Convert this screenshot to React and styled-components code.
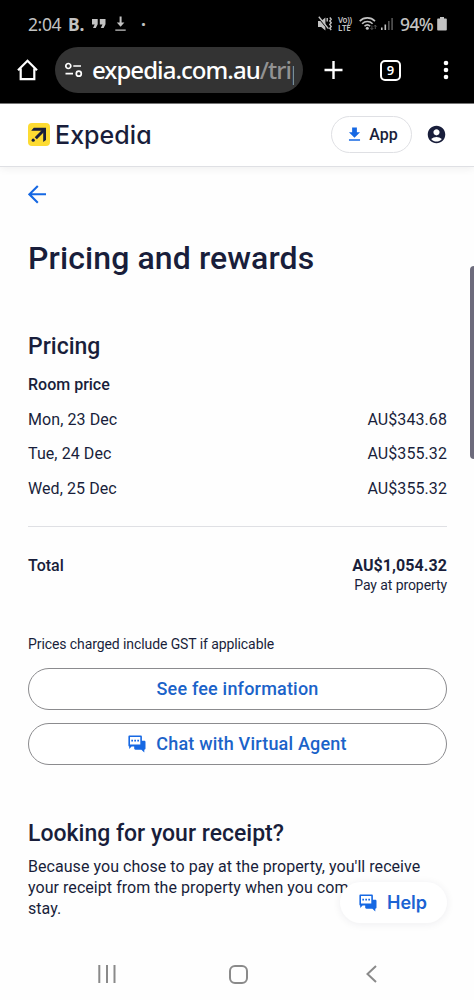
import React from "react";
import styled, { createGlobalStyle } from "styled-components";
import { MdAccountCircle, MdFileDownload } from "react-icons/md";

const GlobalStyle = createGlobalStyle`
  * {
    box-sizing: border-box;
  }
  body {
    margin: 0;
    background: #ffffff;
    font-family: Roboto, sans-serif;
    color: #191e3b;
  }
  h1, h2, h3, p {
    margin: 0;
    font-weight: 500;
  }
  button {
    font-family: inherit;
    background: #ffffff;
    margin: 0;
    padding: 0;
  }
  svg {
    display: block;
    flex: none;
  }
`;

const Screen = styled.div`
  position: relative;
  width: 474px;
  height: 1000px;
  overflow: hidden;
  display: flex;
  flex-direction: column;
  background: #fefefe;
`;

const StatusBar = styled.div`
  height: 47px;
  padding: 0 27px 0 28px;
  display: flex;
  align-items: center;
  background: #000000;
  color: #c2c2c2;
  font: 400 17.5px/46px "Noto Sans", sans-serif;
`;

const StatusText = styled.span`
  width: ${(props) => props.width};
  font-weight: ${(props) => props.weight || 400};
  letter-spacing: ${(props) => props.spacing || "0"};
  white-space: nowrap;
`;

const Volte = styled.span`
  display: flex;
  flex-direction: column;
  width: 21px;
  font: 600 8px/8px "Noto Sans", sans-serif;
  letter-spacing: -0.3px;
  white-space: nowrap;
`;

const Spacer = styled.div`
  flex: 1;
`;

const BrowserBar = styled.div`
  height: 57px;
  padding: 0 24px 10px 17px;
  display: flex;
  align-items: center;
  background: #000000;
  border-bottom: 1px solid #777777;
`;

const AddressBar = styled.div`
  width: 248px;
  height: 46px;
  margin: 0 20px 0 17px;
  padding-left: 9px;
  display: flex;
  align-items: center;
  border-radius: 23px;
  background: #333333;
`;

const Url = styled.span`
  width: 202px;
  margin-left: 9px;
  overflow: hidden;
  color: #ffffff;
  font: 500 24px/48px "Noto Sans", sans-serif;
  letter-spacing: -0.95px;
  white-space: nowrap;
`;

const UrlPath = styled.span`
  color: #929292;
`;

const TabCount = styled.div`
  width: 21px;
  height: 21px;
  margin: 0 42px 0 37px;
  border: 2.4px solid #ffffff;
  border-radius: 5px;
  color: #ffffff;
  font: 600 13px/16px "Noto Sans", sans-serif;
  text-align: center;
`;

const Header = styled.header`
  height: 63px;
  padding: 0 27px 1px 28px;
  display: flex;
  align-items: center;
  background: #ffffff;
  border-bottom: 1px solid #dfe0e4;
  box-shadow: 0 2px 8px rgba(0, 0, 0, 0.06);
`;

const Brand = styled.span`
  margin-left: 5px;
  font: 500 25px/32px Inter, sans-serif;
  font-feature-settings: "cv11";
  letter-spacing: 0.05px;
`;

const AppButton = styled.button`
  width: 81px;
  height: 37px;
  margin-right: 14px;
  display: flex;
  align-items: center;
  justify-content: center;
  gap: 5px;
  border: 1px solid #dfe0e4;
  border-radius: 19px;
  color: #191e3b;
  font-size: 16px;
  font-weight: 500;
  svg {
    color: #1668e3;
  }
`;

const Main = styled.main`
  height: 781px;
  padding: 17px 27px 0 28px;
`;

const Title = styled.h1`
  margin-top: 34px;
  font-size: 32px;
  line-height: 40px;
  letter-spacing: 0.1px;
`;

const Heading = styled.h2`
  margin-top: ${(props) => props.top};
  font-size: 23px;
  line-height: 28px;
`;

const Label = styled.h3`
  margin: 14px 0 7px;
  font-size: 16px;
  line-height: 20px;
`;

const Row = styled.div`
  height: 34.6px;
  display: flex;
  align-items: center;
  justify-content: space-between;
  font-size: 16px;
  letter-spacing: 0.08px;
`;

const Divider = styled.div`
  height: 1px;
  margin-top: 20px;
  background: #dfe0e4;
`;

const TotalRow = styled.div`
  margin-top: 29px;
  display: flex;
  justify-content: space-between;
  font-size: 16px;
  font-weight: 500;
  line-height: 20px;
`;

const TotalAmount = styled.div`
  text-align: right;
  font-weight: 700;
  letter-spacing: 0.06px;
`;

const Small = styled.p`
  font-size: 14px;
  font-weight: 400;
  line-height: 18px;
  letter-spacing: -0.09px;
`;

const Note = styled(Small)`
  margin: 41px 0 15px;
`;

const OutlineButton = styled.button`
  width: 100%;
  height: 42px;
  margin-bottom: 13.5px;
  padding-bottom: 1px;
  display: flex;
  align-items: center;
  justify-content: center;
  gap: 10px;
  border: 1px solid #8b8b8e;
  border-radius: 21px;
  color: #1b63c9;
  font-size: 18px;
  font-weight: 500;
  letter-spacing: 0.2px;
`;

const Paragraph = styled.p`
  margin-top: 9px;
  font-size: 16px;
  font-weight: 400;
  line-height: 20.8px;
  letter-spacing: 0.05px;
`;

const HelpButton = styled.button`
  position: absolute;
  left: 340px;
  top: 882px;
  width: 107px;
  height: 41px;
  padding-left: 19px;
  display: flex;
  align-items: center;
  gap: 10px;
  border: 0;
  border-radius: 21px;
  color: #1b63d3;
  box-shadow: 0 1px 8px rgba(25, 30, 59, 0.07);
  font: 600 18px/24px Inter, sans-serif;
`;

const ScrollThumb = styled.div`
  position: absolute;
  right: 0;
  top: 266px;
  width: 4px;
  height: 193px;
  border-radius: 4px 0 0 4px;
  background: #6d6b7c;
`;

const NavBar = styled.nav`
  height: 52px;
  padding: 0 96px 0 98px;
  display: flex;
  align-items: center;
`;

const prices = [
  { day: "Mon, 23 Dec", price: "AU$343.68" },
  { day: "Tue, 24 Dec", price: "AU$355.32" },
  { day: "Wed, 25 Dec", price: "AU$355.32" },
];

const ChatIcon = () => (
  <svg width="18" height="18" viewBox="0 0 18 18" fill="#1668e3">
    <path
      fillRule="evenodd"
      d="M1.5.5h11.2c.7 0 1.2.5 1.2 1.2v4h2.3c.8 0 1.3.5 1.3 1.2v6.6c0 .7-.5 1.2-1.2 1.2v2.9l-2.9-2.9H7.4c-.7 0-1.2-.5-1.2-1.2v-2H3.6L1.2 14v-2.5c-.5-.1-.8-.5-.8-1.1V1.7C.4 1 .8.5 1.5.5zM2 2.1v7.3h10.3V2.1z"
    />
    <path d="M3.3 4.8h1.7v1.7H3.3zM6.3 4.8H8v1.7H6.3zM9.3 4.8H11v1.7H9.3z" />
  </svg>
);

const StatusIcons = () => (
  <>
    <svg width="20" height="16" viewBox="0 0 20 16" fill="#c2c2c2">
      <path d="M0 5h3.2L7.4 1.5v13L3.2 11H0z" />
      <path d="M0 1.2 10.3 13.6" stroke="#000000" strokeWidth="1.2" />
      <path
        d="M.8.8l9.6 11.8M9.2 2v3.4M11.8 1.5l1.4 1.7-1.4 1.8 1.4 1.8-1.4 1.8 1.4 1.8-1.4 1.8 1.4 1.8"
        fill="none"
        stroke="#c2c2c2"
        strokeWidth="1.4"
      />
    </svg>
    <Volte>
      <span>Vo))</span>
      <span>LTE</span>
    </Volte>
    <svg width="22" height="16" viewBox="0 0 22 16">
      <g fill="none" stroke="#c2c2c2" strokeWidth="1.6">
        <path d="M.7 5.1c4.3-4.3 11-4.3 15.3 0M3.1 7.7c3-3 7.5-3 10.5 0M5.5 10.2c1.7-1.7 4-1.7 5.7 0" />
      </g>
      <circle cx="8.3" cy="12.2" r="1.5" fill="#c2c2c2" />
      <path
        d="M12.9 9.5v4M11.5 12l1.4 1.6 1.4-1.6M16.3 13V9.2M14.9 10.6l1.4-1.5 1.4 1.5"
        fill="none"
        stroke="#555555"
      />
    </svg>
    <svg width="19" height="14" viewBox="0 0 19 14" fill="#c2c2c2">
      <path d="M0 10.5h1.6V13H0zM3.5 7.5h1.6V13H3.5z" />
      <path d="M7 4h1.6v9H7zM10.3 1h1.6v12h-1.6z" fill="#555555" />
    </svg>
  </>
);

export default function App() {
  return (
    <>
      <GlobalStyle />
      <Screen>
        <StatusBar>
          <StatusText width="40px" spacing="-0.4px">
            2:04
          </StatusText>
          <StatusText width="24px" weight={700}>
            B.
          </StatusText>
          <svg width="49" height="16" viewBox="0 0 49 16" fill="#c2c2c2">
            <path d="M0 3h5.7v5.2L3.8 12H1l1.7-3.5H0zM7.8 3h5.7v5.2L11.6 12H8.8l1.7-3.5H7.8z" />
            <path d="M23.3 13.4h10.4v1.4H23.3zM27.6.5h2v6h2.8l-3.8 4.3-3.8-4.3h2.8z" />
          </svg>
          <StatusText width="10px" weight={700}>
            ·
          </StatusText>
          <Spacer />
          <StatusIcons />
          <StatusText width="37px" weight={500} spacing="-0.6px">
            94%
          </StatusText>
          <svg width="10" height="14" viewBox="0 0 10 14" fill="#c2c2c2">
            <path d="M3 0h4v1.5h2c.5 0 .8.3.8.8v10.4c0 .5-.3.8-.8.8H1c-.5 0-.8-.3-.8-.8V2.3c0-.5.3-.8.8-.8h2z" />
          </svg>
        </StatusBar>

        <BrowserBar>
          <svg width="21" height="22" viewBox="0 0 21 22" fill="none" stroke="#ffffff" strokeWidth="2.2">
            <path d="M1 11.3 10.5 1.8 20 11.3M3.7 9.5v10.7h13.6V9.5" />
          </svg>
          <AddressBar>
            <svg width="19" height="16" viewBox="0 0 19 16" fill="none" stroke="#ffffff" strokeWidth="1.7">
              <circle cx="4.3" cy="4" r="2.5" />
              <path d="M9.3 4H17M1.5 11.7H9" />
              <circle cx="14.8" cy="11.7" r="2.5" />
            </svg>
            <Url>
              expedia.com.au<UrlPath>/trips</UrlPath>
            </Url>
          </AddressBar>
          <svg width="20" height="20" viewBox="0 0 20 20" stroke="#ffffff" strokeWidth="2.4">
            <path d="M10.5 1v18M1.5 10h18" />
          </svg>
          <TabCount>9</TabCount>
          <svg width="6" height="20" viewBox="0 0 6 20" fill="#ffffff">
            <circle cx="3" cy="3" r="2.3" />
            <circle cx="3" cy="10" r="2.3" />
            <circle cx="3" cy="17" r="2.3" />
          </svg>
        </BrowserBar>

        <Header>
          <svg width="22" height="23" viewBox="0 0 22 23">
            <rect width="22" height="23" rx="4" fill="#fddb32" />
            <path d="M5.8 4.7H18v12.4l-2.8 1.8V7.7H3.2z" fill="#191e3b" />
            <path d="M16.2 6.8 7.8 15.2" stroke="#191e3b" strokeWidth="3" />
            <circle cx="5.2" cy="17.2" r="1.6" fill="#191e3b" />
          </svg>
          <Brand>Expedia</Brand>
          <Spacer />
          <AppButton>
            <MdFileDownload size={19} />
            App
          </AppButton>
          <MdAccountCircle size={21} />
        </Header>

        <Main>
          <svg width="19" height="20" viewBox="0 0 19 20" fill="none" stroke="#1668e3" strokeWidth="2.1">
            <path d="M18 10.3H1.5M9.8 1.9 1.4 10.3l8.4 8.4" />
          </svg>
          <Title>Pricing and rewards</Title>
          <Heading top="55px">Pricing</Heading>
          <Label>Room price</Label>
          {prices.map((item) => (
            <Row key={item.day}>
              <span>{item.day}</span>
              <span>{item.price}</span>
            </Row>
          ))}
          <Divider />
          <TotalRow>
            <span>Total</span>
            <TotalAmount>
              AU$1,054.32
              <Small>Pay at property</Small>
            </TotalAmount>
          </TotalRow>
          <Note>Prices charged include GST if applicable</Note>
          <OutlineButton>See fee information</OutlineButton>
          <OutlineButton>
            <ChatIcon />
            Chat with Virtual Agent
          </OutlineButton>
          <Heading top="55px">Looking for your receipt?</Heading>
          <Paragraph>
            Because you chose to pay at the property, you'll receive
            <br />
            your receipt from the property when you com
            <br />
            stay.
          </Paragraph>
        </Main>

        <NavBar>
          <svg width="18" height="18" viewBox="0 0 18 18" stroke="#8a8a8a" strokeWidth="2">
            <path d="M1.3 0v18M9 0v18M16.5 0v18" />
          </svg>
          <Spacer />
          <svg width="19" height="19" viewBox="0 0 19 19" fill="none" stroke="#8a8a8a" strokeWidth="2">
            <rect x="1" y="1" width="17" height="17" rx="5" />
          </svg>
          <Spacer />
          <svg width="18" height="18" viewBox="0 0 18 18" fill="none" stroke="#8a8a8a" strokeWidth="2">
            <path d="M16 1 7.5 9l8.5 8" />
          </svg>
        </NavBar>

        <HelpButton>
          <ChatIcon />
          Help
        </HelpButton>
        <ScrollThumb />
      </Screen>
    </>
  );
}
